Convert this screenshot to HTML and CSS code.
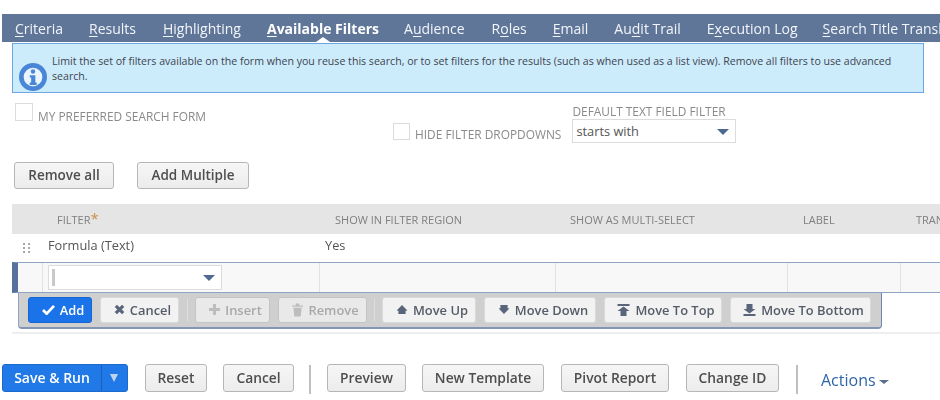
FILE: index.html
```html
<!DOCTYPE html>
<html lang="en">
<head>
<meta charset="utf-8">
<title>Available Filters</title>
<link rel="stylesheet" href="styles.css">
</head>
<body>
<nav class="tabs">
  <a class="tab t1"><u>C</u>riteria</a>
  <a class="tab t2"><u>R</u>esults</a>
  <a class="tab t3"><u>H</u>ighlighting</a>
  <a class="tab t4 active"><u>A</u>vailable Filters</a>
  <a class="tab t5">A<u>u</u>dience</a>
  <a class="tab t6">R<u>o</u>les</a>
  <a class="tab t7"><u>E</u>mail</a>
  <a class="tab t8">Au<u>d</u>it Trail</a>
  <a class="tab t9">E<u>x</u>ecution Log</a>
  <a class="tab t10"><u>S</u>earch Title Translation</a>
</nav>
<section class="banner">
  <svg class="info" viewBox="0 0 30 30" width="28" height="28">
    <circle cx="15" cy="15" r="12.500" fill="#eaf5fc" stroke="#4a86d8" stroke-width="5"/>
    <circle cx="15" cy="9" r="2.400" fill="#4a86d8"/>
    <path d="M11.500 13h6v8h1.500v2.500h-7.500V21H13v-5.500h-1.500z" fill="#4a86d8"/>
  </svg>
  <p class="banner-text">Limit the set of filters available on the form when you reuse this search, or to set filters for the results (such as when used as a list view). Remove all filters to use advanced search.</p>
</section>
<section class="options">
  <label class="opt opt-pref"><span class="check"></span><span class="cap">MY PREFERRED SEARCH FORM</span></label>
  <label class="opt opt-hide"><span class="check"></span><span class="cap">HIDE FILTER DROPDOWNS</span></label>
  <div class="opt-default">
    <span class="cap">DEFAULT TEXT FIELD FILTER</span>
    <div class="select select-default"><span>starts with</span><i class="caret"></i></div>
  </div>
</section>
<div class="actions-top">
  <button class="btn big">Remove all</button>
  <button class="btn big b-multi">Add Multiple</button>
</div>
<section class="table">
  <div class="row head">
    <span></span>
    <span class="h-filter">FILTER<b class="req">*</b></span>
    <span class="h-region">SHOW IN FILTER REGION</span>
    <span class="h-multi">SHOW AS MULTI-SELECT</span>
    <span class="h-label">LABEL</span>
    <span class="h-trans">TRANSLATION</span>
  </div>
  <div class="row data">
    <span class="grip"><svg viewBox="0 0 8 10" width="8" height="10"><g fill="#a8a8a8"><rect x="0" y="0" width="2" height="2"/><rect x="5" y="0" width="2" height="2"/><rect x="0" y="4" width="2" height="2"/><rect x="5" y="4" width="2" height="2"/><rect x="0" y="8" width="2" height="2"/><rect x="5" y="8" width="2" height="2"/></g></svg></span>
    <span class="d-filter">Formula (Text)</span>
    <span>Yes</span>
    <span></span><span></span><span></span>
  </div>
  <div class="row edit">
    <span class="cell"></span>
    <span class="cell"><div class="select select-row"><i class="cursor"></i><i class="caret"></i></div></span>
    <span class="cell"></span><span class="cell"></span><span class="cell"></span><span class="cell last"></span>
  </div>
  <div class="toolbar">
    <button class="tbtn primary w-add"><svg viewBox="0 0 14 12" width="13" height="11"><path d="M1 6.500l4 4 8-8.500" fill="none" stroke="#fff" stroke-width="3"/></svg>Add</button>
    <button class="tbtn w-cancel"><svg viewBox="0 0 12 12" width="11" height="11"><path d="M2 2l8 8M10 2l-8 8" fill="none" stroke="#59657a" stroke-width="3.400"/></svg>Cancel</button>
    <i class="tsep tsep-first"></i>
    <button class="tbtn off w-insert"><svg viewBox="0 0 12 12" width="11" height="11"><path d="M6 0v12M0 6h12" fill="none" stroke="#bdbdbd" stroke-width="3.400"/></svg>Insert</button>
    <button class="tbtn off w-remove"><svg viewBox="0 0 12 14" width="11" height="14"><path d="M0 2h12v1.500H0zM4 0h4v2H4zM1.500 4.500h9L9.500 14h-7z" fill="#bdbdbd"/></svg>Remove</button>
    <i class="tsep"></i>
    <button class="tbtn w-up"><svg viewBox="0 0 12 10" width="12" height="9"><path d="M6 0l6 6-2 .5V10H2V6.500L0 6z" fill="#59657a"/></svg>Move Up</button>
    <button class="tbtn w-down"><svg viewBox="0 0 12 10" width="12" height="9"><path d="M6 10L0 4l2-.5V0h8v3.500l2 .5z" fill="#59657a"/></svg>Move Down</button>
    <button class="tbtn w-top"><svg viewBox="0 0 12 12" width="13" height="12"><path d="M0 0h12v2H0zM6 2.500l6 4.500H9v5H3V7H0z" fill="#59657a"/></svg>Move To Top</button>
    <button class="tbtn w-bottom"><svg viewBox="0 0 12 12" width="13" height="12"><path d="M3 0h6v5h3L6 9.500 0 5h3zM0 10h12v2H0z" fill="#59657a"/></svg>Move To Bottom</button>
  </div>
</section>
<footer class="bottom">
  <div class="split">
    <span class="split-main">Save &amp; Run</span>
    <span class="split-arrow"><i></i></span>
  </div>
  <button class="btn foot f-reset">Reset</button>
  <button class="btn foot f-cancel">Cancel</button>
  <i class="fsep"></i>
  <button class="btn foot f-preview">Preview</button>
  <button class="btn foot f-template">New Template</button>
  <button class="btn foot f-pivot">Pivot Report</button>
  <button class="btn foot f-change">Change ID</button>
  <i class="fsep fsep-last"></i>
  <a class="actions">Actions<i></i></a>
</footer>
</body>
</html>
```

FILE: styles.css
```css
* { box-sizing: border-box; }
html, body { margin: 0; padding: 0; }
html { overflow: hidden; }
body {
  width: 940px;
  height: 400px;
  overflow: hidden;
  background: #fff;
  font-family: "Open Sans", "Liberation Sans", sans-serif;
  color: #4a4a4a;
  filter: blur(0.35px);
}
button { font-family: inherit; margin: 0; cursor: default; }

.tabs {
  display: flex;
  margin: 14px 0 0 2px;
  height: 28px;
  background: #5f7699;
  white-space: nowrap;
  overflow: hidden;
}
.tab {
  position: relative;
  flex: none;
  font-size: 14px;
  line-height: 30px;
  color: #f2f5f9;
}
.tab u { text-decoration-thickness: 1px; text-underline-offset: 2px; }
.t1 { margin-left: 13px; }
.t2 { margin-left: 26px; }
.t3 { margin-left: 27px; }
.t4 { margin-left: 26px; }
.t5 { margin-left: 25px; }
.t6 { margin-left: 27px; }
.t7 { margin-left: 26px; }
.t8 { margin-left: 26px; }
.t9 { margin-left: 26px; }
.t10 { margin-left: 25px; }
.active { font-weight: 700; color: #fff; }
.active::after {
  content: "";
  position: absolute;
  left: 50%;
  bottom: 0;
  margin-left: -7px;
  border-left: 7px solid transparent;
  border-right: 7px solid transparent;
  border-bottom: 5px solid #fff;
}

.banner {
  position: relative;
  margin: 1px 0 0 12px;
  width: 912px;
  height: 50px;
  background: #cdecfb;
  border: 1px solid #6ea6e4;
  padding: 10px 20px 0 39px;
}
.info { position: absolute; left: 6px; top: 19px; }
.banner-text {
  margin: 0;
  font-size: 10.600px;
  line-height: 15px;
  color: #3e4450;
}

.options { display: flex; height: 60px; }
.cap { font-size: 11.900px; color: #8a8a8a; white-space: nowrap; }
.check {
  display: block;
  flex: none;
  width: 18px;
  height: 18px;
  background: #fff;
  border: 1px solid #dcdcdc;
}
.opt { display: flex; align-items: flex-start; flex: none; }
.opt .cap { line-height: 14px; margin-left: 5px; }
.opt-pref { margin: 10px 0 0 15px; }
.opt-pref .cap { margin-top: 6px; }
.opt-hide { margin: 30px 0 0 187px; }
.opt-hide .check { width: 17px; height: 17px; }
.opt-hide .cap { margin-top: 4px; }
.opt-default { display: flex; flex-direction: column; margin: 11px 0 0 11px; }
.opt-default .cap { line-height: 15px; }
.select {
  position: relative;
  background: #fff;
  border: 1px solid #dcdcdc;
}
.select-default {
  width: 164px;
  height: 24px;
  font-size: 12.800px;
  line-height: 22px;
  padding-left: 3px;
  color: #555;
}
.caret {
  position: absolute;
  right: 6px;
  top: 9px;
  border-left: 6px solid transparent;
  border-right: 6px solid transparent;
  border-top: 6px solid #4f6a92;
}

.actions-top { display: flex; gap: 23px; margin: 9px 0 0 14px; }
.btn {
  background: linear-gradient(#f6f6f6, #ececec);
  border: 1px solid #b6b6b6;
  border-radius: 3px;
  color: #4e4e4e;
  font-weight: 600;
  padding: 0 0 2px;
}
.big { width: 100px; height: 27px; font-size: 13.500px; }
.b-multi { width: 112px; }

.table { margin: 15px 0 0 12px; border-bottom: 2px solid #eee; height: 130px; position: relative; }
.row {
  display: grid;
  grid-template-columns: 30px 277px 236px 232px 113px minmax(0, 1fr);
  white-space: nowrap;
  overflow: hidden;
}
.head {
  height: 30px;
  background: #e5e5e5;
  font-size: 11px;
  line-height: 32px;
  color: #7f7f7f;
}
.h-filter { padding-left: 15px; }
.req { font-weight: 400; color: #c8924e; font-size: 15px; line-height: 10px; }
.h-region { padding-left: 16px; }
.h-multi { padding-left: 15px; }
.h-label { padding-left: 16px; }
.h-trans { padding-left: 16px; }
.data {
  height: 28px;
  font-size: 12.800px;
  line-height: 22px;
  color: #555;
}
.grip { display: flex; align-items: center; padding: 0 0 0 11px; height: 27px; }
.d-filter { padding-left: 6px; }
.data span:nth-child(3) { padding-left: 6px; }
.edit {
  height: 31px;
  background: #f8f8f8;
  border-top: 1px solid #8fa3c4;
  border-bottom: 1px solid #8fa3c4;
  border-left: 6px solid #56719c;
  grid-template-columns: 25px 277px 236px 232px 113px minmax(0, 1fr);
}
.cell { border-right: 1px solid #e2e2e2; display: block; }
.last { border-right: 0; }
.select-row {
  width: 174px;
  height: 25px;
  margin: 2px 0 0 5px;
}
.cursor {
  position: absolute;
  left: 3px;
  top: 3px;
  width: 3px;
  height: 17px;
  background: #c9c9c9;
}

.toolbar {
  display: flex;
  align-items: center;
  width: 864px;
  height: 36px;
  margin-left: 6px;
  padding: 0 0 1px 9px;
  background: #cfcfcf;
  border-left: 1px solid #8fa3c4;
  border-right: 1px solid #6f86aa;
  border-bottom: 2px solid #8396b6;
  border-radius: 0 0 4px 4px;
  gap: 8px;
}
.tbtn {
  display: flex;
  align-items: center;
  justify-content: center;
  gap: 5px;
  flex: none;
  height: 26px;
  background: #f2f2f2;
  border: 1px solid #dadada;
  border-radius: 3px;
  color: #555c68;
  font-size: 12.900px;
  font-weight: 600;
  padding: 0 0 0 6px;
}
.primary { background: #1a73e8; border-color: #1566d0; color: #fff; }
.off { color: #a9a9a9; background: #e9e9e9; border-color: #c4c4c4; }
.w-add { width: 64px; }
.w-cancel { width: 79px; }
.w-insert { width: 75px; }
.w-remove { width: 89px; }
.w-up { width: 94px; }
.w-down { width: 112px; }
.w-top { width: 118px; }
.w-bottom { width: 141px; }
.tsep { flex: none; width: 1px; height: 22px; margin: 0 -1px; background: #dedede; }
.tsep-first { margin-left: 0; }

.bottom { display: flex; align-items: flex-start; margin: 30px 0 0 2px; height: 36px; }
.split {
  display: flex;
  flex: none;
  width: 126px;
  height: 28px;
  background: #2079e6;
  border: 1px solid #1a6ad0;
  border-radius: 3px;
  color: #fff;
  font-size: 14px;
  font-weight: 600;
  line-height: 26px;
}
.split-main { flex: 1; text-align: center; }
.split-arrow {
  position: relative;
  flex: none;
  width: 26px;
  border-left: 1px solid #1a5fbc;
}
.split-arrow i {
  position: absolute;
  left: 8px;
  top: 9px;
  border-left: 4px solid transparent;
  border-right: 4px solid transparent;
  border-top: 8px solid #bcd6f2;
}
.foot { flex: none; height: 28px; font-size: 13.800px; margin-left: 16px; }
.f-reset { width: 62px; margin-left: 17px; }
.f-cancel { width: 71px; }
.f-preview { width: 79px; }
.f-template { width: 122px; }
.f-pivot { width: 108px; margin-left: 17px; }
.f-change { width: 93px; margin-left: 17px; }
.fsep { flex: none; width: 2px; height: 29px; margin: 1px 0 0 15px; background: #bfbfbf; }
.fsep-last { margin-left: 17px; }
.actions {
  flex: none;
  margin: 3px 0 0 23px;
  font-size: 16px;
  line-height: 26px;
  color: #2f66a8;
}
.actions i {
  display: inline-block;
  margin-left: 3px;
  vertical-align: 2px;
  border-left: 5px solid transparent;
  border-right: 5px solid transparent;
  border-top: 4px solid #5a6f8f;
}
```
